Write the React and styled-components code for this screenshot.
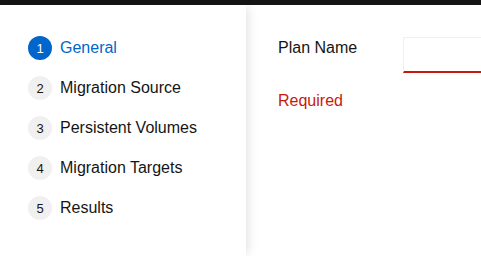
import React from 'react'
import styled, {createGlobalStyle} from 'styled-components'

const GlobalStyle = createGlobalStyle`
  html, body {
    margin: 0;
    padding: 0;
    background: #fff;
    font-family: "Liberation Sans", Arial, sans-serif;
    color: #151515;
  }
`

const Page = styled.div`
  display: flex;
  flex-direction: column;
  height: 256px;
  overflow: hidden;
`

const TopBar = styled.div`
  height: 5px;
  background: #151515;
  flex-shrink: 0;
`

const Body = styled.div`
  display: flex;
  flex: 1;
`

const Nav = styled.nav`
  width: 246px;
  flex-shrink: 0;
  padding: 31px 0 0 28px;
  box-sizing: border-box;
  background: #fff;
  box-shadow: 4px 0 10px -2px rgba(3, 3, 3, 0.12);
  position: relative;
  z-index: 1;
`

const Steps = styled.ol`
  list-style: none;
  margin: 0;
  padding: 0;
  display: flex;
  flex-direction: column;
  gap: 16px;
`

const Step = styled.li`
  display: flex;
  align-items: center;
  gap: 8px;
  height: 24px;
  font-size: 16px;
  color: ${p => (p.$active ? '#06c' : '#151515')};
`

const Num = styled.span`
  width: 24px;
  height: 24px;
  border-radius: 50%;
  display: flex;
  align-items: center;
  justify-content: center;
  font-size: 13px;
  background: ${p => (p.$active ? '#06c' : '#f0f0f0')};
  color: ${p => (p.$active ? '#fff' : '#151515')};
`

const Main = styled.main`
  flex: 1;
  padding: 32px 0 0 32px;
  display: flex;
  flex-direction: column;
  gap: 19px;
`

const FieldRow = styled.div`
  display: grid;
  grid-template-columns: 125px 1fr;
  align-items: start;
`

const Label = styled.label`
  font-size: 16px;
  line-height: 20px;
  padding-top: 1px;
`

const Input = styled.input`
  height: 36px;
  box-sizing: border-box;
  border: 1px solid #f0f0f0;
  border-bottom: 2px solid #c9190b;
  border-right: none;
  outline: none;
  font: inherit;
  padding: 0 8px;
  width: 100%;
`

const Error = styled.div`
  font-size: 16px;
  color: #c9190b;
`

const steps = ['General', 'Migration Source', 'Persistent Volumes', 'Migration Targets', 'Results']

const App = () => (
  <>
    <GlobalStyle />
    <Page>
      <TopBar />
      <Body>
        <Nav>
          <Steps>
            {steps.map((s, i) => (
              <Step key={s} $active={i === 0}>
                <Num $active={i === 0}>{i + 1}</Num>
                {s}
              </Step>
            ))}
          </Steps>
        </Nav>
        <Main>
          <FieldRow>
            <Label htmlFor="plan-name">Plan Name</Label>
            <Input id="plan-name" />
          </FieldRow>
          <Error>Required</Error>
        </Main>
      </Body>
    </Page>
  </>
)

export default App
